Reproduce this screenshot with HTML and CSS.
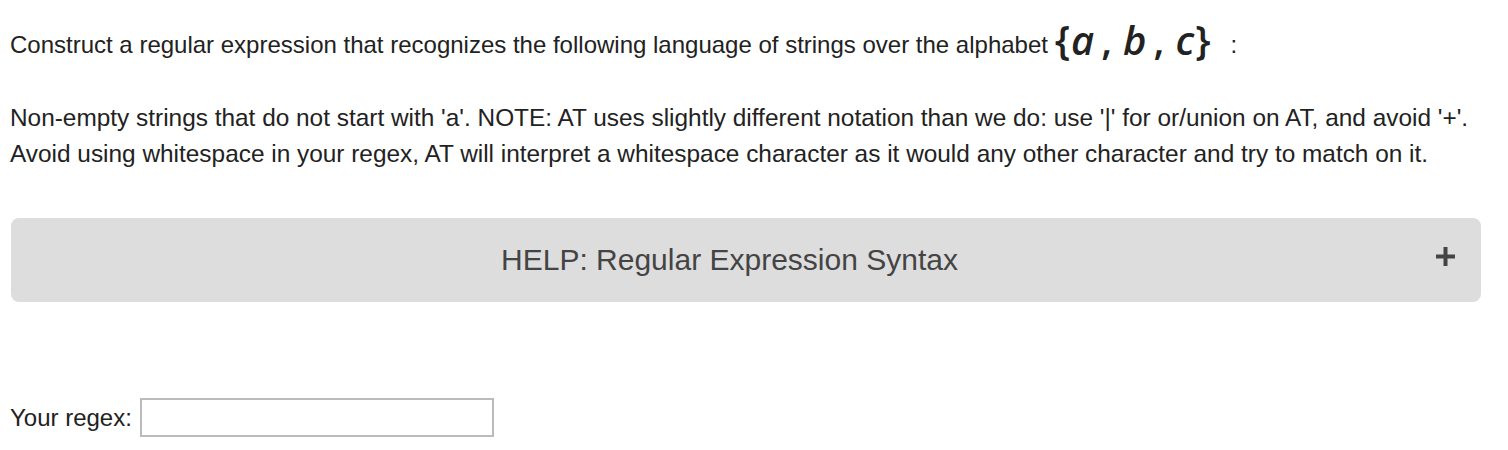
FILE: index.html
```html
<!DOCTYPE html>
<html>
<head>
<meta charset="utf-8">
<link rel="stylesheet" href="styles.css">
</head>
<body>
<div class="page">
  <p class="prompt">Construct a regular expression that recognizes the following language of strings over the alphabet <span class="math"><span class="br">{</span><i>a</i><span class="cm">,</span><i>b</i><span class="cm">,</span><i>c</i><span class="br">}</span></span><span class="colon">:</span></p>
  <p class="desc">Non-empty strings that do not start with 'a'. NOTE: AT uses slightly different notation than we do: use '|' for or/union on AT, and avoid '+'. Avoid using whitespace in your regex, AT will interpret a whitespace character as it would any other character and try to match on it.</p>
  <div class="help">
    <span class="help-title">HELP: Regular Expression Syntax</span>
    <svg class="plus" width="19" height="19" viewBox="0 0 19 19"><rect x="0" y="7.5" width="19" height="4" fill="#444"/><rect x="7.5" y="0" width="4" height="19" fill="#444"/></svg>
  </div>
  <div class="answer">
    <label class="answer-label" for="rx">Your regex:</label>
    <input class="answer-input" id="rx" type="text">
  </div>
</div>
</body>
</html>
```

FILE: styles.css
```css
html, body {
  margin: 0;
  padding: 0;
  background: #fff;
}
.page {
  padding: 0 10px;
  font-family: "Liberation Sans", Arial, sans-serif;
  font-size: 24.4px;
  color: #222;
}
.prompt {
  margin: 0;
  padding-top: 18px;
  height: 48px;
  line-height: 44px;
  font-size: 24px;
  white-space: nowrap;
}
.math {
  font-family: "Open Sans", sans-serif;
  font-weight: 600;
  font-size: 40px;
  color: #222;
  margin-left: 0;
  vertical-align: -2px;
  line-height: 44px;
}
.math i {
  font-style: italic;
  padding: 0 1px;
}
.math .br {
  font-style: normal;
}
.math .cm {
  padding: 0 10px 0 6px;
}
.colon {
  margin-left: 20px;
}
.desc {
  margin: 34px 0 0 0;
  line-height: 36px;
}
.help {
  margin: 46px 17px 0 1px;
  height: 84px;
  background: #dddddd;
  border-radius: 8px;
  display: flex;
  align-items: center;
  justify-content: center;
  padding-right: 33px;
  position: relative;
}
.help-title {
  font-family: "Liberation Sans", Arial, sans-serif;
  font-size: 30px;
  color: #444;
}
.plus {
  position: absolute;
  right: 26px;
  top: 29px;
}
.answer {
  margin-top: 96px;
  display: flex;
  align-items: center;
  gap: 8px;
}
.answer-label {
  font-size: 24px;
}
.answer-input {
  width: 350px;
  height: 35px;
  box-sizing: content-box;
  padding: 0;
  border: 2px solid #bbb;
  margin: 0;
  font-size: 20px;
  background: #fff;
}
```
